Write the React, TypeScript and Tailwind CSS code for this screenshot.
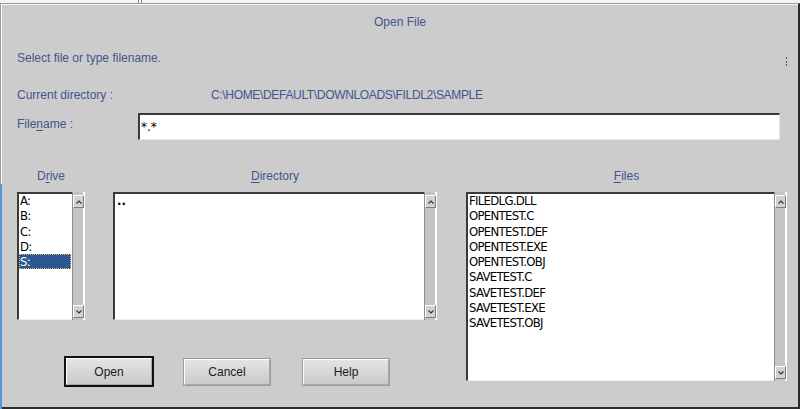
import type { ReactNode } from "react"

const labelColor = "text-[#42558c]"
const listFont = "font-['DejaVu_Sans',sans-serif] font-stretch-condensed text-[13px] tracking-[-0.7px]"

function Dots({ className = "" }: { className?: string }) {
  return (
    <div className={`flex flex-col gap-[1.5px] ${className}`}>
      <div className="w-px h-[2px] bg-[#555]" />
      <div className="w-px h-[2px] bg-[#555]" />
      <div className="w-px h-[2px] bg-[#555]" />
    </div>
  )
}

function Arrow({ down = false }: { down?: boolean }) {
  return (
    <div className="w-[11px] h-[13px] flex items-center justify-center bg-[#d2d2d2] border-t border-l border-t-white border-l-white border-b border-r border-b-[#7c7c7c] border-r-[#7c7c7c]">
      <svg width="6" height="4" viewBox="0 0 6 4">
        {down ? (
          <polyline points="0.5,0.5 3,3 5.5,0.5" fill="none" stroke="#333" strokeWidth="1.2" />
        ) : (
          <polyline points="0.5,3.5 3,1 5.5,3.5" fill="none" stroke="#333" strokeWidth="1.2" />
        )}
      </svg>
    </div>
  )
}

function ScrollBar() {
  return (
    <div className="w-[13px] flex flex-col justify-between bg-[#c4c4c4] border-l border-l-[#8e8e8e] border-r-2 border-r-white pt-[3px] pb-[2px]">
      <Arrow />
      <Arrow down />
    </div>
  )
}

function ListBox({ className, children }: { className: string; children?: ReactNode }) {
  return (
    <div className={`flex ${className}`}>
      <div className="flex-1 min-w-0 bg-white border-t-2 border-l-2 border-t-[#3a3a3a] border-l-[#3a3a3a] border-b border-b-[#eeeeee] overflow-hidden">
        <div className={`-mt-px leading-[15.25px] text-black ${listFont}`}>{children}</div>
      </div>
      <ScrollBar />
    </div>
  )
}

function Button({ label, isDefault = false }: { label: string; isDefault?: boolean }) {
  const face = (
    <div className="w-full h-full flex items-center justify-center bg-linear-to-b from-[#e4e4e4] to-[#cacaca] border-t border-l border-t-white border-l-white border-b border-r border-b-[#a8a8a8] border-r-[#a8a8a8] text-[12px] text-[#1c1c1c]">
      {label}
    </div>
  )
  if (isDefault) {
    return <div className="w-[90px] h-[31px] border-2 border-[#111]">{face}</div>
  }
  return <div className="w-[88px] h-[28px] border border-[#9c9c9c]">{face}</div>
}

const drives = ["A:", "B:", "C:", "D:", "S:"]
const files = [
  "FILEDLG.DLL",
  "OPENTEST.C",
  "OPENTEST.DEF",
  "OPENTEST.EXE",
  "OPENTEST.OBJ",
  "SAVETEST.C",
  "SAVETEST.DEF",
  "SAVETEST.EXE",
  "SAVETEST.OBJ",
]

export default function App() {
  return (
    <div className="w-[800px] h-[409px] flex flex-col bg-[#f3f3f3] overflow-hidden font-['Liberation_Sans',Arial,sans-serif] text-[12px]">
      {/* window behind the dialog */}
      <div className="h-[3px] flex shrink-0">
        <div className="ml-[138px] w-px bg-[#8c8c8c]" />
        <div className="ml-[2px] w-px bg-[#8c8c8c]" />
      </div>

      <div className="flex flex-1 min-h-0">
        <div className="w-[2px] flex flex-col">
          <div className="h-[181px] bg-white border-l border-l-[#9c9c9c] border-t border-t-[#9c9c9c]" />
          <div className="flex-1 bg-[#5b97d2]" />
        </div>

        <div className="flex-1 flex flex-col bg-[#cccccc] border-t border-t-[#9c9c9c] border-r-2 border-r-[#2c2c2c] border-b-2 border-b-[#2c2c2c]">
          <div className="h-px bg-[#f4f4f4]" />

          <div className={`mt-[10px] h-[15px] leading-[15px] text-center ${labelColor}`}>Open File</div>

          <div className={`mt-[21px] flex items-start pl-[15px] pr-[11px] ${labelColor}`}>
            <span className="leading-[15px]">Select file or type filename.</span>
            <Dots className="ml-auto mt-[6px]" />
          </div>

          <div className={`mt-[22px] flex pl-[15px] leading-[15px] ${labelColor}`}>
            <span className="w-[194px]">Current directory :</span>
            <span className="tracking-[-0.33px]">C:\HOME\DEFAULT\DOWNLOADS\FILDL2\SAMPLE</span>
          </div>

          <div className="mt-[10px] flex items-start pl-[15px] pr-[18px]">
            <span className={`w-[121px] mt-[4px] leading-[15px] ${labelColor}`}>
              File<span className="underline underline-offset-2">n</span>ame :
            </span>
            <div className="flex-1 h-[27px] bg-white border-t-2 border-l-2 border-t-[#3a3a3a] border-l-[#3a3a3a] border-b border-r border-b-[#e6e6e6] border-r-[#e6e6e6] flex items-center pl-px text-black font-['DejaVu_Sans',sans-serif] text-[12px]">
              *.*
            </div>
          </div>

          <div className="mt-[29px] flex pl-[15px]">
            <div className="flex flex-col">
              <div className={`flex h-[15px] leading-[15px] ${labelColor}`}>
                <div className="w-[68px] text-center">
                  D<span className="underline underline-offset-2">r</span>ive
                </div>
                <div className="ml-[28px] w-[324px] text-center">
                  <span className="underline underline-offset-2">D</span>irectory
                </div>
              </div>

              <div className="mt-[8px] flex h-[128px]">
                <ListBox className="w-[68px] h-full">
                  {drives.map((d) =>
                    d === "S:" ? (
                      <div key={d} className="mr-px h-[15.25px] bg-[#2c5892] text-white border border-dotted border-[#d9b868] leading-[13.25px]">
                        {d}
                      </div>
                    ) : (
                      <div key={d} className="pl-px">
                        {d}
                      </div>
                    ),
                  )}
                </ListBox>
                <ListBox className="ml-[28px] w-[324px] h-full">
                  <div className="pl-[2px] font-bold tracking-normal">..</div>
                </ListBox>
              </div>

              <div className="mt-[36px] flex items-center h-[31px] pl-[47px]">
                <Button label="Open" isDefault />
                <div className="ml-[29px]">
                  <Button label="Cancel" />
                </div>
                <div className="ml-[31px]">
                  <Button label="Help" />
                </div>
              </div>
            </div>

            <div className="ml-[29px] w-[321px] flex flex-col">
              <div className={`h-[15px] leading-[15px] text-center ${labelColor}`}>
                <span className="underline underline-offset-2">F</span>iles
              </div>
              <ListBox className="mt-[8px] h-[189px]">
                {files.map((f) => (
                  <div key={f} className="pl-px">
                    {f}
                  </div>
                ))}
              </ListBox>
            </div>
          </div>
        </div>
      </div>
    </div>
  )
}
